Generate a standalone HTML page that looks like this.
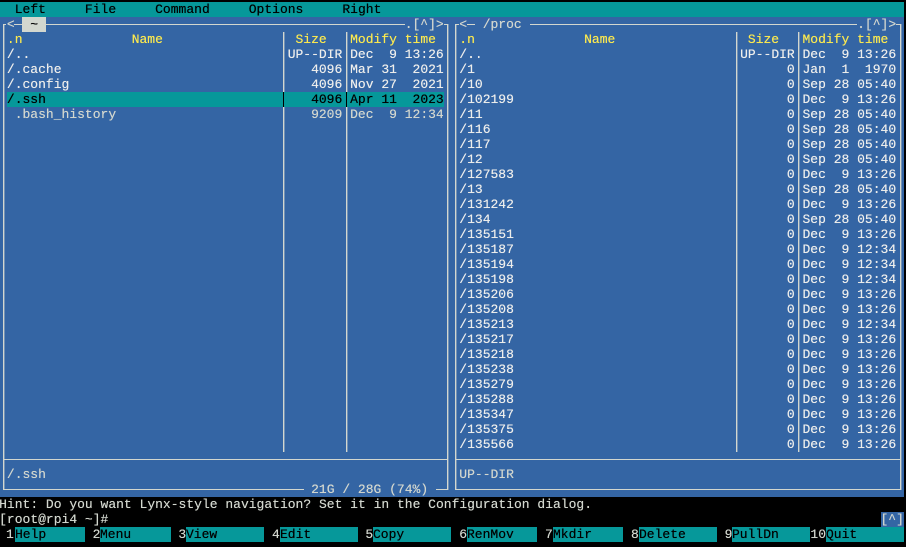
<!DOCTYPE html>
<html>
<head>
<meta charset="utf-8">
<style>
html,body{margin:0;padding:0;background:#000;}
body{width:906px;height:547px;position:relative;overflow:hidden;font-family:"Liberation Mono",monospace;font-size:13px;line-height:15px;color:#d3d7cf;}
#s{position:absolute;left:0;top:0;width:906px;height:547px;filter:blur(0.35px);}
pre{margin:0 0 0 -0.9px;padding:0;font:inherit;line-height:15px;position:absolute;white-space:pre;text-shadow:0 0 0.4px currentColor;}
.a{position:absolute;}
.l{position:absolute;background:#d3d7cf;}
.v{box-shadow:1px 0 0 rgba(211,215,207,.4);}
.y{color:#fce94f;}
.w{color:#eeeeec;}
.t{position:absolute;background:#06989a;height:15px;top:527px;color:#000;line-height:15px;text-shadow:0 0 0.4px #000;}
pre.n{position:absolute;top:527px;color:#d3d7cf;margin-left:0;}
</style>
</head>
<body>
<div id="s">
<div class="a" style="left:0;top:2px;width:904px;height:15px;background:#06989a;"></div>
<pre style="left:0;top:2px;color:#000;">  Left     File     Command     Options     Right</pre>
<div class="a" style="left:0;top:17px;width:904px;height:480px;background:#3465a4;"></div>

<!-- left panel borders -->
<div class="l v" style="left:3px;top:24px;width:1px;height:466px;"></div>
<div class="l v" style="left:447px;top:24px;width:1px;height:466px;"></div>
<div class="l" style="left:3px;top:24px;width:3px;height:1px;"></div>
<div class="l" style="left:14px;top:24px;width:391px;height:1px;"></div>
<div class="l" style="left:444px;top:24px;width:4px;height:1px;"></div>
<div class="l" style="left:3px;top:459px;width:445px;height:1px;"></div>
<div class="l" style="left:3px;top:489px;width:301px;height:1px;"></div>
<div class="l" style="left:436px;top:489px;width:12px;height:1px;"></div>
<div class="l v" style="left:283px;top:32px;width:1px;height:420px;"></div>
<div class="l v" style="left:346px;top:32px;width:1px;height:420px;"></div>

<!-- right panel borders -->
<div class="l v" style="left:455px;top:24px;width:1px;height:466px;"></div>
<div class="l v" style="left:900px;top:24px;width:1px;height:466px;"></div>
<div class="l" style="left:455px;top:24px;width:4px;height:1px;"></div>
<div class="l" style="left:467px;top:24px;width:8px;height:1px;"></div>
<div class="l" style="left:530px;top:24px;width:327px;height:1px;"></div>
<div class="l" style="left:896px;top:24px;width:5px;height:1px;"></div>
<div class="l" style="left:455px;top:459px;width:446px;height:1px;"></div>
<div class="l" style="left:455px;top:489px;width:446px;height:1px;"></div>
<div class="l v" style="left:736px;top:32px;width:1px;height:420px;"></div>
<div class="l v" style="left:798px;top:32px;width:1px;height:420px;"></div>

<!-- titles -->
<pre style="left:7.8px;top:17px;">&lt;</pre>
<div class="a" style="left:22px;top:17px;width:24px;height:15px;background:#d3d7cf;"></div>
<pre style="left:31.2px;top:17px;color:#000;">~</pre>
<pre style="left:405.6px;top:17px;">.[^]&gt;</pre>
<pre style="left:460.2px;top:17px;">&lt;</pre>
<pre style="left:483.6px;top:17px;">/proc</pre>
<pre style="left:858px;top:17px;">.[^]&gt;</pre>

<!-- left panel -->
<div class="a" style="left:7px;top:92px;width:437px;height:15px;background:#06989a;"></div>
<div class="a" style="left:283px;top:92px;width:1px;height:15px;background:#000;"></div>
<div class="a" style="left:346px;top:92px;width:1px;height:15px;background:#000;"></div>
<pre style="left:7.8px;top:32px;"><span class="y">.n</span>
<span class="w">/..</span>
<span class="w">/.cache</span>
<span class="w">/.config</span>
<span style="color:#000;">/.ssh</span>
 .bash_history</pre>
<pre class="y" style="left:132.6px;top:32px;">Name</pre>
<pre class="y" style="left:296.4px;top:32px;">Size</pre>
<pre class="y" style="left:351px;top:32px;">Modify time</pre>
<pre style="left:288.6px;top:47px;width:54.6px;text-align:right;"><span class="w">UP--DIR</span>
<span class="w">4096</span>
<span class="w">4096</span>
<span style="color:#000;">4096</span>
9209</pre>
<pre style="left:351px;top:47px;"><span class="w">Dec  9 13:26</span>
<span class="w">Mar 31  2021</span>
<span class="w">Nov 27  2021</span>
<span style="color:#000;">Apr 11  2023</span>
Dec  9 12:34</pre>
<pre style="left:7.8px;top:467px;">/.ssh</pre>
<pre style="left:312px;top:482px;">21G / 28G (74%)</pre>

<!-- right panel -->
<pre class="y" style="left:460.2px;top:32px;">.n</pre>
<pre class="y" style="left:585px;top:32px;">Name</pre>
<pre class="y" style="left:748.8px;top:32px;">Size</pre>
<pre class="y" style="left:803.4px;top:32px;">Modify time</pre>
<pre style="left:460.2px;top:47px;color:#eeeeec;">/..
/1
/10
/102199
/11
/116
/117
/12
/127583
/13
/131242
/134
/135151
/135187
/135194
/135198
/135206
/135208
/135213
/135217
/135218
/135238
/135279
/135288
/135347
/135375
/135566</pre>
<pre style="left:741px;top:47px;width:54.6px;text-align:right;color:#eeeeec;">UP--DIR
0
0
0
0
0
0
0
0
0
0
0
0
0
0
0
0
0
0
0
0
0
0
0
0
0
0</pre>
<pre style="left:803.4px;top:47px;color:#eeeeec;">Dec  9 13:26
Jan  1  1970
Sep 28 05:40
Dec  9 13:26
Sep 28 05:40
Sep 28 05:40
Sep 28 05:40
Sep 28 05:40
Dec  9 13:26
Sep 28 05:40
Dec  9 13:26
Sep 28 05:40
Dec  9 13:26
Dec  9 12:34
Dec  9 12:34
Dec  9 12:34
Dec  9 13:26
Dec  9 13:26
Dec  9 12:34
Dec  9 13:26
Dec  9 13:26
Dec  9 13:26
Dec  9 13:26
Dec  9 13:26
Dec  9 13:26
Dec  9 13:26
Dec  9 13:26</pre>
<pre style="left:460.2px;top:467px;">UP--DIR</pre>

<!-- bottom -->
<pre style="left:0;top:497px;">Hint: Do you want Lynx-style navigation? Set it in the Configuration dialog.</pre>
<pre style="left:0;top:512px;">[root@rpi4 ~]#</pre>
<div class="a" style="left:881px;top:512px;width:23px;height:15px;background:#3465a4;"></div>
<pre style="left:881.4px;top:512px;">[^]</pre>

<pre class="n" style="left:6px;">1</pre><div class="t" style="left:15px;width:70px;">Help</div>
<pre class="n" style="left:92.6px;">2</pre><div class="t" style="left:100px;width:71px;">Menu</div>
<pre class="n" style="left:178.4px;">3</pre><div class="t" style="left:186px;width:78px;">View</div>
<pre class="n" style="left:272px;">4</pre><div class="t" style="left:280px;width:78px;">Edit</div>
<pre class="n" style="left:365.4px;">5</pre><div class="t" style="left:373px;width:78px;">Copy</div>
<pre class="n" style="left:459.2px;">6</pre><div class="t" style="left:467px;width:70px;">RenMov</div>
<pre class="n" style="left:545px;">7</pre><div class="t" style="left:553px;width:70px;">Mkdir</div>
<pre class="n" style="left:631px;">8</pre><div class="t" style="left:639px;width:78px;">Delete</div>
<pre class="n" style="left:724.6px;">9</pre><div class="t" style="left:732px;width:78px;">PullDn</div>
<pre class="n" style="left:810.4px;">10</pre><div class="t" style="left:826px;width:78px;">Quit</div>
</div>
</body>
</html>
